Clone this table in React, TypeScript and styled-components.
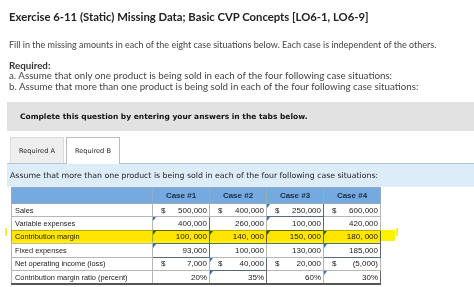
import React from 'react';
import styled, { createGlobalStyle } from 'styled-components';

const GlobalStyle = createGlobalStyle`
  html, body {
    margin: 0;
    padding: 0;
    background: #fff;
    overflow: hidden;
  }
`;

const Page = styled.div`
  width: 474px;
  height: 287px;
  overflow: hidden;
  font-family: Lato, 'Open Sans', sans-serif;
  color: #333;
`;

const Intro = styled.div`
  padding: 9px 0 0 9px;
`;

const Title = styled.h1`
  margin: 0;
  font-size: 11.3px;
  line-height: 16px;
  font-weight: 700;
  color: #222;
`;

const Text = styled.p<{ $top?: number; $size?: number }>`
  margin: ${(p) => p.$top ?? 0}px 0 0 0;
  font-size: ${(p) => p.$size ?? 9.75}px;
  line-height: 10.5px;
  color: #444;
  white-space: nowrap;
`;

const Bold = styled.span`
  font-weight: 700;
  color: #333;
`;

const Notice = styled.div`
  margin: 11px 0 0 7px;
  height: 29px;
  background: #e2e2e2;
  display: flex;
  align-items: center;
  padding-left: 13px;
  font-family: 'DejaVu Sans', Verdana, sans-serif;
  font-weight: 700;
  font-size: 7.5px;
  color: #111;
`;

const Tabs = styled.div`
  display: flex;
  gap: 2px;
  margin: 6px 0 0 10px;
  height: 26px;
  align-items: flex-end;
`;

const Tab = styled.div<{ $active?: boolean }>`
  height: 26px;
  box-sizing: border-box;
  padding: 0 8px;
  display: flex;
  align-items: center;
  font-family: 'DejaVu Sans', Verdana, sans-serif;
  font-size: 6.6px;
  color: #222;
  background: ${(p) => (p.$active ? '#fff' : '#eeeeee')};
  border: 1px solid ${(p) => (p.$active ? '#bbb' : '#dcdcdc')};
  border-bottom: none;
  ${(p) => (p.$active ? 'margin-bottom: -1px; height: 27px; position: relative;' : '')}
`;

const InfoBar = styled.div`
  margin-left: 7px;
  height: 24px;
  box-sizing: border-box;
  background: #dcecf9;
  border-top: 1px solid #b8c4cc;
  display: flex;
  align-items: center;
  padding-left: 3px;
  font-family: 'DejaVu Sans', Verdana, sans-serif;
  font-size: 7.8px;
  color: #222;
  white-space: nowrap;
`;

const TableWrap = styled.div`
  position: relative;
  margin-left: 11px;
  width: 367px;
`;

const Grid = styled.table`
  border-collapse: collapse;
  table-layout: fixed;
  width: 367px;
  font-family: 'Liberation Sans', Arial, sans-serif;
  font-size: 8px;
  color: #222;
  border-bottom: 2px solid #555;
`;

const Head = styled.th<{ $w?: number }>`
  width: ${(p) => p.$w ?? 56}px;
  height: 15px;
  padding: 0;
  background: #74aae0;
  border: 1px solid #9ab;
  font-weight: 700;
  color: #1a2a40;
  text-align: center;
`;

const Label = styled.td<{ $mark?: boolean }>`
  height: 12.4px;
  padding: 0 0 0 3px;
  border: 1px solid #b6b6b6;
  background: ${(p) => (p.$mark ? '#fff200' : '#fff')};
  white-space: nowrap;
  font-size: 7.4px;
`;

const Cell = styled.td<{ $input?: boolean; $mark?: boolean }>`
  position: relative;
  padding: 0 2px 0 8px;
  border: 1px solid ${(p) => (p.$input ? '#5a6a7a' : '#b6b6b6')};
  background: ${(p) => (p.$mark ? '#fff200' : '#fff')};
  white-space: nowrap;
`;

const Inner = styled.div`
  display: flex;
  justify-content: space-between;
`;

const Amount = styled.span`
  margin-left: auto;
`;

const Flag = styled.span`
  position: absolute;
  top: 0;
  left: 0;
  width: 0;
  height: 0;
  border-top: 4px solid #2d6fc2;
  border-right: 3px solid transparent;
`;

const Highlight = styled.div`
  position: absolute;
  left: 0;
  top: 43px;
  width: 384px;
  height: 11px;
  background: #fff200;
  mix-blend-mode: multiply;
  pointer-events: none;
`;

const HighlightTick = styled.div<{ $x: number }>`
  position: absolute;
  left: ${(p) => p.$x}px;
  top: 41px;
  width: 2px;
  height: 8px;
  background: #ffe94a;
`;

type CellData = { v: string; dollar?: boolean; input?: boolean };
type Row = { label: string; mark?: boolean; cells: CellData[] };

const rows: Row[] = [
  {
    label: 'Sales',
    cells: [
      { v: '500,000', dollar: true },
      { v: '400,000', dollar: true },
      { v: '250,000', dollar: true, input: true },
      { v: '600,000', dollar: true },
    ],
  },
  {
    label: 'Variable expenses',
    cells: [
      { v: '400,000', input: true },
      { v: '260,000' },
      { v: '100,000', input: true },
      { v: '420,000' },
    ],
  },
  {
    label: 'Contribution margin',
    mark: true,
    cells: [
      { v: '100, 000', input: true },
      { v: '140, 000', input: true },
      { v: '150, 000', input: true },
      { v: '180, 000', input: true },
    ],
  },
  {
    label: 'Fixed expenses',
    cells: [
      { v: '93,000', input: true },
      { v: '100,000' },
      { v: '130,000' },
      { v: '185,000', input: true },
    ],
  },
  {
    label: 'Net operating income (loss)',
    cells: [
      { v: '7,000', dollar: true },
      { v: '40,000', dollar: true, input: true },
      { v: '20,000', dollar: true },
      { v: '(5,000)', dollar: true },
    ],
  },
  {
    label: 'Contribution margin ratio (percent)',
    cells: [
      { v: '20%' },
      { v: '35%', input: true },
      { v: '60%' },
      { v: '30%', input: true },
    ],
  },
];

export default function App() {
  return (
    <Page>
      <GlobalStyle />
      <Intro>
        <Title>Exercise 6-11 (Static) Missing Data; Basic CVP Concepts [LO6-1, LO6-9]</Title>
        <Text $top={15} $size={9}>
          Fill in the missing amounts in each of the eight case situations below. Each case is independent of the others.
        </Text>
        <Text $top={9}>
          <Bold>Required:</Bold>
        </Text>
        <Text>a. Assume that only one product is being sold in each of the four following case situations:</Text>
        <Text>b. Assume that more than one product is being sold in each of the four following case situations:</Text>
      </Intro>
      <Notice>Complete this question by entering your answers in the tabs below.</Notice>
      <Tabs>
        <Tab>Required A</Tab>
        <Tab $active>Required B</Tab>
      </Tabs>
      <InfoBar>Assume that more than one product is being sold in each of the four following case situations:</InfoBar>
      <TableWrap>
        <Grid>
          <thead>
            <tr>
              <Head $w={140} />
              <Head>Case #1</Head>
              <Head>Case #2</Head>
              <Head>Case #3</Head>
              <Head>Case #4</Head>
            </tr>
          </thead>
          <tbody>
            {rows.map((r) => (
              <tr key={r.label}>
                <Label $mark={r.mark}>{r.label}</Label>
                {r.cells.map((c, i) => (
                  <Cell key={i} $input={c.input} $mark={r.mark}>
                    {c.input && <Flag />}
                    <Inner>
                      {c.dollar && <span>$</span>}
                      <Amount>{c.v}</Amount>
                    </Inner>
                  </Cell>
                ))}
              </tr>
            ))}
          </tbody>
        </Grid>
        <Highlight />
        <HighlightTick $x={-6} />
        <HighlightTick $x={385} />
      </TableWrap>
    </Page>
  );
}
